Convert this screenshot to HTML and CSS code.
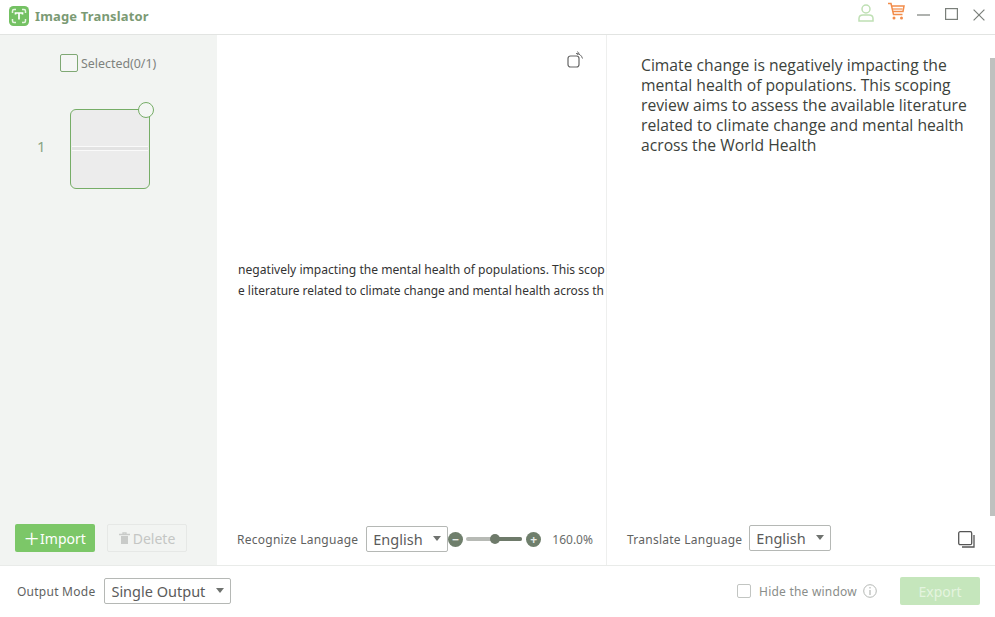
FILE: index.html
```html
<!DOCTYPE html>
<html lang="en">
<head>
<meta charset="utf-8">
<title>Image Translator</title>
<link rel="stylesheet" href="styles.css">
</head>
<body>
<div class="app">
  <header class="titlebar">
    <div class="brand">
      <svg class="logo" width="20" height="20" viewBox="0 0 20 20">
        <rect width="20" height="20" rx="4.500" fill="#74c163"/>
        <path d="M3.500 7V5a1.500 1.500 0 0 1 1.500-1.500h2M13 3.500h2A1.500 1.500 0 0 1 16.500 5v2M3.500 13v2A1.500 1.500 0 0 0 5 16.500h2M13 16.500h2a1.500 1.500 0 0 0 1.500-1.500v-2" fill="none" stroke="#e6f5e1" stroke-width="1.500"/>
        <path d="M6.500 8.500V7h7v1.500M10 7v6.500" fill="none" stroke="#fff" stroke-width="1.700"/>
      </svg>
      <span class="brand-name">Image Translator</span>
    </div>
    <div class="win-controls">
      <svg width="16" height="19" viewBox="0 0 16 19" class="ic-user"><circle cx="8" cy="6" r="4" fill="none" stroke="#bfe0b4" stroke-width="1.500"/><path d="M1 18v-2.500C1 13 3 12 5 12h6c2 0 4 1 4 3.500V18z" fill="none" stroke="#bfe0b4" stroke-width="1.500"/></svg>
      <svg width="18" height="19" viewBox="0 0 18 19" class="ic-cart"><path d="M1 1.500h3l2.500 11h9M5 4h12l-1 5.500H6" fill="none" stroke="#f28c4a" stroke-width="1.500"/><path d="M5.500 7h10" stroke="#f28c4a" stroke-width="1.200"/><circle cx="7" cy="16" r="1.500" fill="#f28c4a"/><circle cx="14.500" cy="16" r="1.500" fill="#f28c4a"/></svg>
      <svg width="13" height="13" viewBox="0 0 13 13" class="ic-min"><path d="M0 7h13" stroke="#7a7f7a" stroke-width="1.200"/></svg>
      <svg width="13" height="13" viewBox="0 0 13 13" class="ic-max"><rect x=".6" y=".6" width="11.800" height="10.800" fill="none" stroke="#7a7f7a" stroke-width="1.200"/></svg>
      <svg width="12" height="12" viewBox="0 0 12 12" class="ic-close"><path d="M.6.6l10.800 10.800M11.400.6L.6 11.400" stroke="#7a7f7a" stroke-width="1.200"/></svg>
    </div>
  </header>

  <main class="workspace">
    <aside class="sidebar">
      <div class="select-all"><span class="checkbox"></span><span class="select-label">Selected(0/1)</span></div>
      <div class="page-row">
        <span class="page-number">1</span>
        <div class="thumb">
          <span class="thumb-band"></span>
          <span class="thumb-radio"></span>
        </div>
      </div>
      <div class="side-actions">
        <button class="btn-import"><span class="plus">+</span>Import</button>
        <button class="btn-delete">
          <svg width="11" height="12" viewBox="0 0 11 12"><path d="M0 2.500h11M4 2.500V.8h3v1.700" fill="none" stroke="#c9cbc9" stroke-width="1.300"/><path d="M2 4h7v8H2z" fill="#c9cbc9"/></svg>Delete</button>
      </div>
    </aside>

    <section class="source">
      <div class="source-tools">
        <svg width="17" height="17" viewBox="0 0 17 17"><rect x="1" y="5" width="11" height="11" rx="2.500" fill="none" stroke="#666" stroke-width="1.200"/><path d="M9 2.500c3 0 5.500 1.500 6.500 5" fill="none" stroke="#666" stroke-width="1"/><path d="M10 .5l2.200 1.800L10 4" fill="none" stroke="#666" stroke-width=".8"/></svg>
      </div>
      <div class="source-view">
        <p class="source-line">negatively impacting the mental health of populations. This scop</p>
        <p class="source-line source-line-second">e literature related to climate change and mental health across th</p>
      </div>
      <div class="lang-row lang-source">
        <span class="lang-label">Recognize Language</span>
        <div class="select select-en"><span>English</span><i class="caret"></i></div>
        <div class="zoomer">
          <span class="round-btn">&minus;</span>
          <span class="track"><span class="track-on"></span><span class="knob"></span></span>
          <span class="round-btn">+</span>
        </div>
        <span class="percent">160.0%</span>
      </div>
    </section>

    <section class="target">
      <div class="scrollbar"></div>
      <p class="target-text">Cimate change is negatively impacting the mental health of populations. This scoping review aims to assess the available literature related to climate change and mental health across the World Health</p>
      <div class="lang-row lang-target">
        <span class="lang-label">Translate Language</span>
        <div class="select select-en select-tr"><span>English</span><i class="caret"></i></div>
        <svg class="copy-icon" width="17" height="17" viewBox="0 0 17 17"><rect x=".7" y=".7" width="13" height="13" rx="1.500" fill="none" stroke="#555" stroke-width="1.300"/><path d="M16 4v12H4" fill="none" stroke="#555" stroke-width="1.300"/></svg>
      </div>
    </section>
  </main>

  <footer class="footer">
    <span class="lang-label">Output Mode</span>
    <div class="select select-mode"><span>Single Output</span><i class="caret"></i></div>
    <div class="footer-right">
      <span class="hide-check"></span>
      <span class="hide-label">Hide the window</span>
      <svg width="14" height="14" viewBox="0 0 14 14" class="info"><circle cx="7" cy="7" r="6.300" fill="none" stroke="#b5b8b5"/><path d="M7 3v1.500M7 6v5" stroke="#b5b8b5" stroke-width="1.200"/></svg>
      <button class="btn-export">Export</button>
    </div>
  </footer>
</div>
</body>
</html>
```

FILE: styles.css
```css
* { box-sizing: border-box; }
html, body { margin: 0; height: 100%; background: #fff; overflow: hidden; }
body { font-family: "Noto Sans", "Open Sans", "Liberation Sans", sans-serif; color: #555; }
button { font-family: inherit; cursor: pointer; }
p { margin: 0; }

.app { width: 995px; height: 617px; display: flex; flex-direction: column; }

.titlebar { height: 35px; flex: none; display: flex; align-items: center; justify-content: space-between; border-bottom: 1px solid #e2e4e2; padding: 0 9px; }
.brand { display: flex; align-items: center; gap: 6px; margin-top: -3px; }
.brand-name { font-size: 13px; font-weight: 700; color: #7b9a74; letter-spacing: .15px; }
.win-controls { display: flex; align-items: center; margin-top: -9px; margin-right: 1px; }
.ic-user { margin-right: 14px; }
.ic-cart { margin-right: 13px; margin-left: -1px; margin-top: -3px; }
.ic-min { margin-right: 15px; margin-top: 3px; margin-left: -1px; }
.ic-max { margin-right: 15px; margin-top: 3px; }
.ic-close { margin-top: 4px; }

.workspace { flex: none; display: flex; height: 531px; border-bottom: 1px solid #e9ebe9; }

.sidebar { width: 217px; flex: none; background: #f2f4f2; display: flex; flex-direction: column; }
.select-all { display: flex; align-items: center; gap: 3px; margin: 19px 0 0 60px; height: 18px; }
.checkbox { width: 18px; height: 18px; border: 1px solid #7fa874; border-radius: 2px; background: #f5f6f5; }
.select-label { font-size: 12.400px; color: #7e827e; }
.page-row { display: flex; align-items: center; margin-top: 37px; padding-left: 37px; }
.page-number { width: 33px; font-size: 15px; color: #8aa483; margin-top: -7px; }
.thumb { position: relative; width: 80px; height: 80px; border: 1px solid #76ad67; border-radius: 6px; background: #ececec; display: flex; align-items: center; justify-content: center; }
.thumb-band { width: 76px; height: 5px; border-top: 1px solid #fafafa; border-bottom: 1px solid #fafafa; background: #e3e3e3; margin-top: -1px; }
.thumb-radio { position: absolute; top: -8px; right: -5px; width: 16px; height: 16px; border-radius: 50%; border: 1px solid #76ad67; background: #f4f6f4; }
.side-actions { margin-top: auto; display: flex; gap: 12px; padding: 0 0 13px 15px; }
.btn-import { width: 80px; height: 28px; border: 0; border-radius: 2px; background: #7cc768; color: #fff; font-size: 14px; display: flex; align-items: center; justify-content: center; padding: 0; }
.plus { font-size: 26px; line-height: 22px; font-weight: 300; margin-right: 1px; }
.btn-delete { width: 80px; height: 28px; border: 1px solid #e6e8e6; border-radius: 2px; background: #f2f4f2; color: #c4c6c4; font-size: 14px; display: flex; align-items: center; justify-content: center; gap: 3px; padding: 0; }

.source { width: 390px; flex: none; border-right: 1px solid #eeefee; display: flex; flex-direction: column; }
.source-tools { height: 48px; flex: none; display: flex; justify-content: flex-end; align-items: flex-start; padding: 16px 22px 0 0; }
.source-view { flex: 1; min-height: 0; display: flex; flex-direction: column; justify-content: center; padding: 0 0 37px 21px; }
.source-line { font-size: 12.100px; line-height: 20px; height: 20px; white-space: nowrap; color: #333; }
.source-line-second { font-size: 11.930px; }

.lang-row { height: 52px; flex: none; display: flex; align-items: center; }
.lang-source { padding: 0 0 0 20px; }
.lang-target { padding: 0 20px 0 20px; }
.lang-label { font-size: 12px; color: #5f625f; letter-spacing: .25px; }

.select { position: relative; height: 26px; border: 1px solid #b5b8b5; border-radius: 2px; background: #fff; display: flex; align-items: center; color: #5b5b5b; font-size: 14.500px; padding-left: 6px; }
.select-en { width: 82px; margin-left: 8px; }
.select-tr { margin-left: 7px; margin-top: -2px; }
.select-mode { width: 127px; margin-left: 9px; }
.caret { position: absolute; right: 6px; top: 9px; width: 0; height: 0; border-left: 4px solid transparent; border-right: 4px solid transparent; border-top: 5px solid #6f726f; }

.zoomer { display: flex; align-items: center; }
.round-btn { width: 15px; height: 15px; border-radius: 50%; background: #6f7f6c; color: #e8ece8; font-size: 12px; font-weight: 700; line-height: 15px; text-align: center; }
.track { position: relative; display: block; width: 56px; height: 4px; margin: 0 4px 0 3px; background: #b7bab5; border-radius: 2px; }
.track-on { position: absolute; right: 0; top: 0; width: 27px; height: 4px; background: #6e7a6a; border-radius: 2px; }
.knob { position: absolute; left: 24px; top: -3px; width: 10px; height: 10px; border-radius: 50%; background: #6e7a6a; }
.percent { margin-left: 11px; font-size: 12px; color: #6a6d6a; }

.target { flex: 1; position: relative; display: flex; flex-direction: column; }
.scrollbar { position: absolute; right: 0; top: 23px; width: 5px; height: 458px; background: #bfc1bf; }
.target-text { flex: 1; margin: 0; padding: 20px 24px 0 34px; font-size: 15.700px; line-height: 20px; color: #3c423c; font-family: "Open Sans", "Noto Sans", sans-serif; }
.copy-icon { margin-left: auto; }

.footer { height: 51px; flex: none; display: flex; align-items: center; padding: 0 15px 1px 17px; }
.footer-right { margin-left: auto; display: flex; align-items: center; }
.hide-check { width: 14px; height: 14px; border: 1px solid #c2c5c2; border-radius: 2px; }
.hide-label { margin-left: 8px; font-size: 12px; color: #8a8d8a; letter-spacing: .22px; }
.info { margin-left: 6px; }
.btn-export { margin-left: 23px; width: 80px; height: 28px; border: 0; border-radius: 2px; background: #c5e6bc; color: #e4f4df; font-size: 14px; padding: 0; }
```
